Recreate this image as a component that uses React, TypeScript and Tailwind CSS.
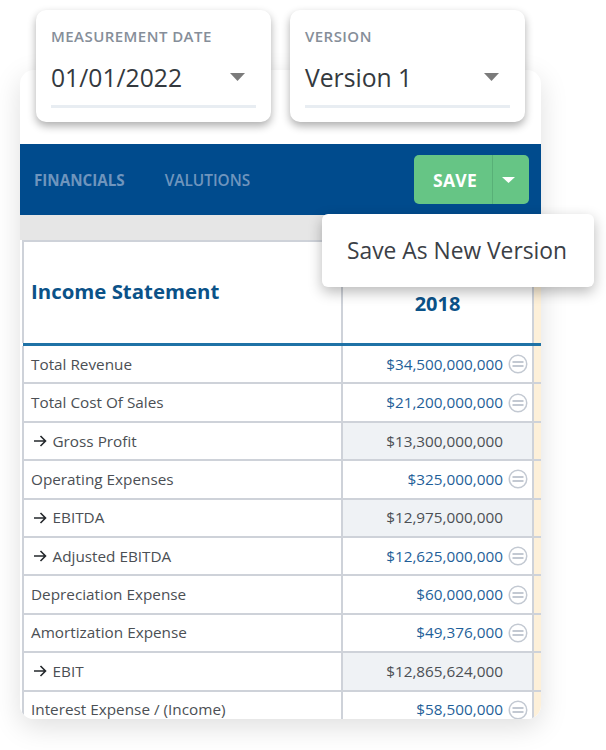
import React from 'react';

type Row = {
  label: string;
  value: string;
  arrow?: boolean;
  computed?: boolean;
};

const ROWS: Row[] = [
  { label: 'Total Revenue', value: '$34,500,000,000' },
  { label: 'Total Cost Of Sales', value: '$21,200,000,000' },
  { label: 'Gross Profit', value: '$13,300,000,000', arrow: true, computed: true },
  { label: 'Operating Expenses', value: '$325,000,000' },
  { label: 'EBITDA', value: '$12,975,000,000', arrow: true, computed: true },
  { label: 'Adjusted EBITDA', value: '$12,625,000,000', arrow: true },
  { label: 'Depreciation Expense', value: '$60,000,000' },
  { label: 'Amortization Expense', value: '$49,376,000' },
  { label: 'EBIT', value: '$12,865,624,000', arrow: true, computed: true },
  { label: 'Interest Expense / (Income)', value: '$58,500,000' },
];

const Caret: React.FC<{ className: string }> = ({ className }) => (
  <svg viewBox="0 0 14 8" preserveAspectRatio="none" className={className} fill="currentColor">
    <path d="M0 0h14L7 8z" />
  </svg>
);

const EqualIcon = () => (
  <svg viewBox="0 0 20 20" className="w-[20px] h-[20px] text-[#c3c9d2]" fill="none" stroke="currentColor">
    <circle cx="10" cy="10" r="8.75" strokeWidth="1.5" />
    <path d="M4.5 8h11M4.5 12h11" strokeWidth="1.8" />
  </svg>
);

const ArrowIcon = () => (
  <svg viewBox="0 0 14 14" className="w-[14px] h-[14px] text-[#24282c]" fill="none" stroke="currentColor" strokeWidth="1.6">
    <path d="M1 7h11.5M7.5 2 12.5 7l-5 5" />
  </svg>
);

const SelectCard: React.FC<{ label: string; value: string }> = ({ label, value }) => (
  <div className="w-[235px] h-[112px] bg-white rounded-[10px] shadow-[0_4px_9px_rgba(0,0,0,0.32)] px-[15px] pt-[16px]">
    <div className="text-[15px] leading-[20px] font-semibold text-[#868e99] tracking-[0.45px]">{label}</div>
    <div className="flex items-center justify-between h-[42px] mt-[10px]">
      <span className="text-[24.7px] leading-[36px] text-[#34393e] pt-[2px]">{value}</span>
      <Caret className="w-[15px] h-[8px] text-[#7b7b7b] mr-[11px]" />
    </div>
    <div className="h-[3px] bg-[#e8edf2] mt-[7px]" />
  </div>
);

export default function App() {
  return (
    <div className="relative w-[606px] h-[750px] bg-white overflow-hidden font-['Open_Sans',sans-serif]">
      <div className="relative z-20 flex gap-[19px] pl-[36px] pt-[10px]">
        <SelectCard label="MEASUREMENT DATE" value="01/01/2022" />
        <SelectCard label="VERSION" value="Version 1" />
      </div>

      <div className="relative z-10 -mt-[52px] ml-[20px] w-[521px] h-[649px] bg-white rounded-[14px] shadow-[0_8px_28px_rgba(0,0,0,0.13)] overflow-hidden pt-[74px]">
        <div className="h-[71px] bg-[#004b8d] flex items-center pl-[14px] pr-[12px]">
          <span className="text-[15.2px] font-bold text-[#6f95bd] pt-[2px]">FINANCIALS</span>
          <span className="text-[15.4px] font-semibold text-[#6f95bd] ml-[40px] pt-[2px]">VALUTIONS</span>
          <div className="ml-auto flex h-[49px] w-[115px] rounded-[5px] bg-[#66c585] text-white">
            <div className="w-[79px] flex items-center justify-center border-r border-[#58b077] pl-[4px] pt-[1px] text-[17.5px] font-bold tracking-[0.3px]">SAVE</div>
            <div className="flex-1 flex items-center justify-center pr-[6px]">
              <Caret className="w-[13px] h-[6px] text-white" />
            </div>
          </div>
        </div>
        <div className="h-[25px] bg-[#e6e6e6]" />

        <div className="flex h-[103px] w-[521px] bg-white pl-[2px]">
          <div className="w-[319px] border-l-2 border-t-2 border-[#ced2d9] flex items-center pl-[7px] pb-[2px]">
            <span className="text-[20.4px] font-bold text-[#0b5288]">Income Statement</span>
          </div>
          <div className="w-[193px] border-l-2 border-t-2 border-r-2 border-[#ced2d9] flex items-end justify-center pb-[27px]">
            <span className="text-[20px] leading-[24px] font-bold text-[#0b5288]">2018</span>
          </div>
          <div className="flex-1 bg-[#fdf0d9]" />
        </div>
        <div className="h-[3px] ml-[3px] bg-[#1f72a6]" />

        {ROWS.map((row) => (
          <div key={row.label} className="flex h-[38.4px] pl-[2px] bg-white">
            <div className="w-[319px] border-l-2 border-b-2 border-[#ced2d9] flex items-center pl-[7px] text-[15.3px] text-[#4b4f54]">
              {row.arrow && (
                <span className="ml-[2px] mr-[5.5px] flex">
                  <ArrowIcon />
                </span>
              )}
              {row.label}
            </div>
            <div
              className={
                row.computed
                  ? 'w-[193px] border-l-2 border-r-2 border-b-2 border-[#ced2d9] bg-[#eff2f5] flex items-center justify-end pr-[29px] text-[15.3px] text-[#4b4f54]'
                  : 'w-[193px] border-l-2 border-r-2 border-b-2 border-[#ced2d9] flex items-center justify-end pr-[4px] text-[15.3px] text-[#1f5f99]'
              }
            >
              {row.value}
              {!row.computed && (
                <span className="ml-[5px] flex">
                  <EqualIcon />
                </span>
              )}
            </div>
            <div className="flex-1 bg-[#fdf0d9] border-b-2 border-[#ced2d9]" />
          </div>
        ))}
      </div>

      <div className="absolute z-30 left-[322px] top-[214px] w-[272px] h-[73px] bg-white rounded-[6px] shadow-[0_5px_14px_rgba(0,0,0,0.28)] flex items-center pl-[25px] pt-[2px] text-[22.8px] text-[#3b4046]">
        Save As New Version
      </div>
    </div>
  );
}
